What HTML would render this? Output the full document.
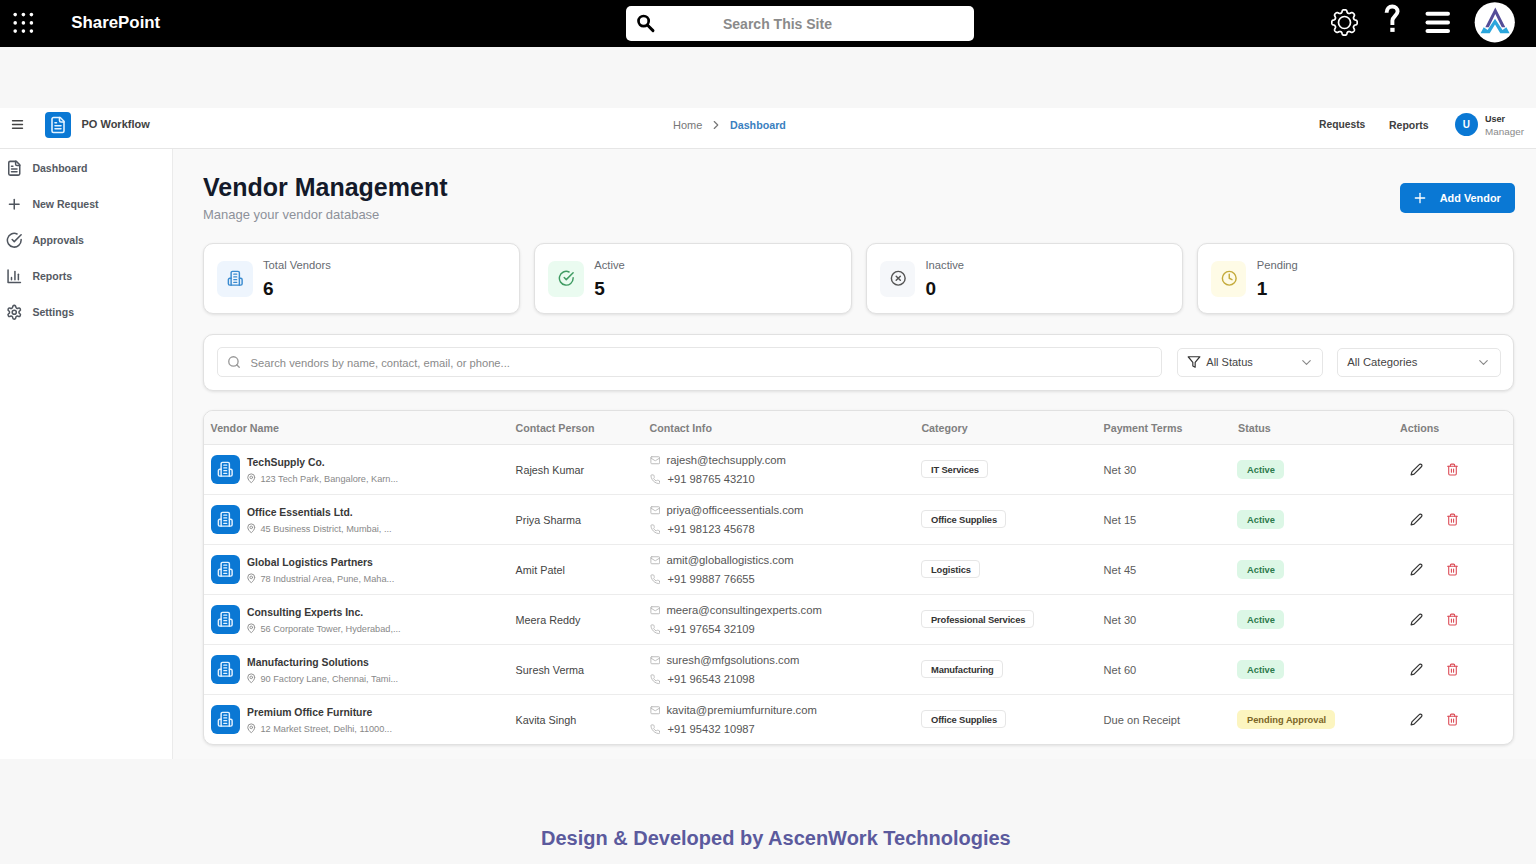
<!DOCTYPE html>
<html><head><meta charset="utf-8">
<style>
*{box-sizing:border-box;margin:0;padding:0}
html,body{width:1536px;height:864px;overflow:hidden;background:#f7f7f7;font-family:"Liberation Sans",sans-serif;position:relative}
.abs{position:absolute}
.card{position:absolute;background:#fff;border:1px solid #e1e1e1;border-radius:10px;box-shadow:0 1px 3px rgba(0,0,0,.1)}
.t{position:absolute;white-space:nowrap;line-height:1}
</style></head><body>
<div class="abs" style="left:0px;top:0px;width:1536px;height:47px;background:#000;"></div>
<svg class="abs" style="left:0;top:0" width="50" height="47"><g fill="#fff"><circle cx="15.2" cy="14.6" r="1.8"/><circle cx="23.4" cy="14.6" r="1.8"/><circle cx="31.4" cy="14.6" r="1.8"/><circle cx="15.2" cy="22.9" r="1.8"/><circle cx="23.4" cy="22.9" r="1.8"/><circle cx="31.4" cy="22.9" r="1.8"/><circle cx="15.2" cy="31.1" r="1.8"/><circle cx="23.4" cy="31.1" r="1.8"/><circle cx="31.4" cy="31.1" r="1.8"/></g></svg>
<div class="t" style="left:71.3px;top:14.9px;font-size:16.85px;font-weight:700;color:#fff;">SharePoint</div>
<div class="abs" style="left:626px;top:6px;width:348px;height:34.5px;background:#fff;border-radius:5px"></div>
<svg class="abs" style="left:630px;top:8px" width="30" height="30"><circle cx="13.6" cy="13.1" r="5.1" fill="none" stroke="#000" stroke-width="2.7"/><line x1="17.4" y1="17" x2="23" y2="22.6" stroke="#000" stroke-width="2.9" stroke-linecap="round"/></svg>
<div class="t" style="left:723px;top:17.1px;font-size:14px;font-weight:700;color:#8a8a8a;">Search This Site</div>
<svg class="abs" style="left:1331px;top:8.8px" width="27" height="27" viewBox="0 0 27 27"><path fill="none" stroke="#fff" stroke-width="1.7" stroke-linejoin="round" d="M13.5 0.8 L13.8 0.8 L14.2 0.8 L14.5 0.8 L14.8 0.9 L15.1 1.1 L15.4 1.3 L15.7 1.8 L15.9 2.3 L16.0 2.9 L16.2 3.4 L16.4 3.7 L16.6 3.9 L16.8 4.1 L17.1 4.2 L17.3 4.3 L17.5 4.4 L17.8 4.5 L18.1 4.5 L18.4 4.5 L18.7 4.4 L19.2 4.2 L19.7 3.9 L20.3 3.7 L20.7 3.5 L21.1 3.6 L21.5 3.7 L21.8 3.8 L22.0 4.0 L22.3 4.3 L22.5 4.5 L22.7 4.7 L23.0 5.0 L23.2 5.2 L23.3 5.5 L23.4 5.9 L23.5 6.3 L23.3 6.7 L23.1 7.3 L22.8 7.8 L22.6 8.3 L22.5 8.6 L22.5 8.9 L22.5 9.2 L22.6 9.5 L22.7 9.7 L22.8 9.9 L22.9 10.2 L23.1 10.4 L23.3 10.6 L23.6 10.8 L24.1 11.0 L24.7 11.1 L25.2 11.3 L25.7 11.6 L25.9 11.9 L26.1 12.2 L26.2 12.5 L26.2 12.8 L26.2 13.2 L26.2 13.5 L26.2 13.8 L26.2 14.2 L26.2 14.5 L26.1 14.8 L25.9 15.1 L25.7 15.4 L25.2 15.7 L24.7 15.9 L24.1 16.0 L23.6 16.2 L23.3 16.4 L23.1 16.6 L22.9 16.8 L22.8 17.1 L22.7 17.3 L22.6 17.5 L22.5 17.8 L22.5 18.1 L22.5 18.4 L22.6 18.7 L22.8 19.2 L23.1 19.7 L23.3 20.3 L23.5 20.7 L23.4 21.1 L23.3 21.5 L23.2 21.8 L23.0 22.0 L22.7 22.3 L22.5 22.5 L22.3 22.7 L22.0 23.0 L21.8 23.2 L21.5 23.3 L21.1 23.4 L20.7 23.5 L20.3 23.3 L19.7 23.1 L19.2 22.8 L18.7 22.6 L18.4 22.5 L18.1 22.5 L17.8 22.5 L17.5 22.6 L17.3 22.7 L17.1 22.8 L16.8 22.9 L16.6 23.1 L16.4 23.3 L16.2 23.6 L16.0 24.1 L15.9 24.7 L15.7 25.2 L15.4 25.7 L15.1 25.9 L14.8 26.1 L14.5 26.2 L14.2 26.2 L13.8 26.2 L13.5 26.2 L13.2 26.2 L12.8 26.2 L12.5 26.2 L12.2 26.1 L11.9 25.9 L11.6 25.7 L11.3 25.2 L11.1 24.7 L11.0 24.1 L10.8 23.6 L10.6 23.3 L10.4 23.1 L10.2 22.9 L9.9 22.8 L9.7 22.7 L9.5 22.6 L9.2 22.5 L8.9 22.5 L8.6 22.5 L8.3 22.6 L7.8 22.8 L7.3 23.1 L6.7 23.3 L6.3 23.5 L5.9 23.4 L5.5 23.3 L5.2 23.2 L5.0 23.0 L4.7 22.7 L4.5 22.5 L4.3 22.3 L4.0 22.0 L3.8 21.8 L3.7 21.5 L3.6 21.1 L3.5 20.7 L3.7 20.3 L3.9 19.7 L4.2 19.2 L4.4 18.7 L4.5 18.4 L4.5 18.1 L4.5 17.8 L4.4 17.5 L4.3 17.3 L4.2 17.1 L4.1 16.8 L3.9 16.6 L3.7 16.4 L3.4 16.2 L2.9 16.0 L2.3 15.9 L1.8 15.7 L1.3 15.4 L1.1 15.1 L0.9 14.8 L0.8 14.5 L0.8 14.2 L0.8 13.8 L0.8 13.5 L0.8 13.2 L0.8 12.8 L0.8 12.5 L0.9 12.2 L1.1 11.9 L1.3 11.6 L1.8 11.3 L2.3 11.1 L2.9 11.0 L3.4 10.8 L3.7 10.6 L3.9 10.4 L4.1 10.2 L4.2 9.9 L4.3 9.7 L4.4 9.5 L4.5 9.2 L4.5 8.9 L4.5 8.6 L4.4 8.3 L4.2 7.8 L3.9 7.3 L3.7 6.7 L3.5 6.3 L3.6 5.9 L3.7 5.5 L3.8 5.2 L4.0 5.0 L4.3 4.7 L4.5 4.5 L4.7 4.3 L5.0 4.0 L5.2 3.8 L5.5 3.7 L5.9 3.6 L6.3 3.5 L6.7 3.7 L7.3 3.9 L7.8 4.2 L8.3 4.4 L8.6 4.5 L8.9 4.5 L9.2 4.5 L9.5 4.4 L9.7 4.3 L9.9 4.2 L10.2 4.1 L10.4 3.9 L10.6 3.7 L10.8 3.4 L11.0 2.9 L11.1 2.3 L11.3 1.8 L11.6 1.3 L11.9 1.1 L12.2 0.9 L12.5 0.8 L12.8 0.8 L13.2 0.8Z"/><circle cx="13.5" cy="13.5" r="6" fill="none" stroke="#fff" stroke-width="1.7"/></svg>
<svg class="abs" style="left:1375px;top:0" width="35" height="40"><path d="M11.6 12.8C11.6 8.6 14.2 6.5 17.3 6.5C20.3 6.5 22.6 8.7 22.6 11.5C22.6 15 17.4 16.6 17.4 20.4L17.4 24.9" fill="none" stroke="#fff" stroke-width="3.9"/><rect x="15.3" y="27.8" width="4.3" height="4.1" fill="#fff"/></svg>
<svg class="abs" style="left:1424px;top:10px" width="28" height="26"><g stroke="#fff" stroke-width="4" stroke-linecap="round"><line x1="3.5" y1="3.8" x2="24" y2="3.8"/><line x1="3.5" y1="12.5" x2="24" y2="12.5"/><line x1="3.5" y1="21.1" x2="24" y2="21.1"/></g></svg>
<svg class="abs" style="left:1474px;top:2px" width="41" height="41" viewBox="0 0 41 41">
    <circle cx="20.75" cy="20.3" r="20.1" fill="#fff"/>
    <path d="M21.3 5.6 L11.3 25.2 L14.8 25.2 L21.3 11.9 L27.8 25.2 L31.3 25.2 Z" fill="#544d98"/>
    <path d="M21 16.8 L13.6 27.9 L9.7 25.3 L6.6 31.2 L15.7 31.2 L21 22.6 L26.3 31.2 L35.6 31.2 L32.4 25.3 L28.5 27.9 Z" fill="#2ba6dc"/>
  </svg>

<div class="abs" style="left:0px;top:47px;width:1536px;height:61px;background:#f7f7f7;"></div>
<div class="abs" style="left:0px;top:108px;width:1536px;height:41px;background:#fff;border-bottom:1px solid #e6e6e6"></div>
<svg class="abs" style="left:9.5px;top:117.3px" width="15" height="15" viewBox="0 0 24 24" fill="none" stroke="#444" stroke-width="2.2" stroke-linecap="round" stroke-linejoin="round"><path d="M4 6h16"/><path d="M4 12h16"/><path d="M4 18h16"/></svg>
<div class="abs" style="left:45px;top:112px;width:26px;height:25.5px;background:#0a78d4;border-radius:4px"></div>
<svg class="abs" style="left:49px;top:115.5px" width="18" height="18" viewBox="0 0 24 24" fill="none" stroke="#e4f3ff" stroke-width="2.1" stroke-linecap="round" stroke-linejoin="round"><path d="M15 2H6a2 2 0 0 0-2 2v16a2 2 0 0 0 2 2h12a2 2 0 0 0 2-2V7Z"/><path d="M14 2v4a2 2 0 0 0 2 2h4"/><path d="M10 9H8"/><path d="M16 13H8"/><path d="M16 17H8"/></svg>
<div class="t" style="left:81.5px;top:119.3px;font-size:11px;font-weight:700;color:#424242;">PO Workflow</div>
<div class="t" style="left:673px;top:120.2px;font-size:11px;font-weight:400;color:#777;">Home</div>
<svg class="abs" style="left:709.2px;top:117.6px" width="14" height="14" viewBox="0 0 24 24" fill="none" stroke="#777" stroke-width="2" stroke-linecap="round" stroke-linejoin="round"><path d="m9 18 6-6-6-6"/></svg>
<div class="t" style="left:730px;top:119.6px;font-size:10.7px;font-weight:700;color:#3a7fc0;">Dashboard</div>
<div class="t" style="left:1319px;top:119.9px;font-size:10.3px;font-weight:700;color:#404040;">Requests</div>
<div class="t" style="left:1389px;top:119.7px;font-size:10.5px;font-weight:700;color:#404040;">Reports</div>
<div class="abs" style="left:1455px;top:113px;width:23px;height:23px;background:#0a78d4;border-radius:50%"></div>
<div class="t" style="left:1462.7px;top:120px;font-size:10px;font-weight:700;color:#fff;">U</div>
<div class="t" style="left:1485px;top:114.7px;font-size:9px;font-weight:700;color:#333;">User</div>
<div class="t" style="left:1485px;top:126.9px;font-size:9.9px;font-weight:400;color:#8a8a8a;">Manager</div>
<div class="abs" style="left:0px;top:149px;width:173px;height:610px;background:#fff;border-right:1px solid #ebebeb"></div>
<svg class="abs" style="left:5.65px;top:159.75px" width="16.5" height="16.5" viewBox="0 0 24 24" fill="none" stroke="#50565f" stroke-width="2.2" stroke-linecap="round" stroke-linejoin="round"><path d="M15 2H6a2 2 0 0 0-2 2v16a2 2 0 0 0 2 2h12a2 2 0 0 0 2-2V7Z"/><path d="M14 2v4a2 2 0 0 0 2 2h4"/><path d="M10 9H8"/><path d="M16 13H8"/><path d="M16 17H8"/></svg>
<div class="t" style="left:32.4px;top:163.2px;font-size:10.55px;font-weight:700;color:#555a63;">Dashboard</div>
<svg class="abs" style="left:5.65px;top:195.75px" width="16.5" height="16.5" viewBox="0 0 24 24" fill="none" stroke="#50565f" stroke-width="2.2" stroke-linecap="round" stroke-linejoin="round"><path d="M5 12h14"/><path d="M12 5v14"/></svg>
<div class="t" style="left:32.4px;top:199.2px;font-size:10.55px;font-weight:700;color:#555a63;">New Request</div>
<svg class="abs" style="left:5.65px;top:231.75px" width="16.5" height="16.5" viewBox="0 0 24 24" fill="none" stroke="#50565f" stroke-width="2.2" stroke-linecap="round" stroke-linejoin="round"><path d="M22 11.08V12a10 10 0 1 1-5.93-9.14"/><path d="m9 11 3 3L22 4"/></svg>
<div class="t" style="left:32.4px;top:235.2px;font-size:10.55px;font-weight:700;color:#555a63;">Approvals</div>
<svg class="abs" style="left:5.65px;top:267.75px" width="16.5" height="16.5" viewBox="0 0 24 24" fill="none" stroke="#50565f" stroke-width="2.2" stroke-linecap="round" stroke-linejoin="round"><path d="M3 3v18h18"/><path d="M18 17V9"/><path d="M13 17V5"/><path d="M8 17v-3"/></svg>
<div class="t" style="left:32.4px;top:271.2px;font-size:10.55px;font-weight:700;color:#555a63;">Reports</div>
<svg class="abs" style="left:5.65px;top:303.75px" width="16.5" height="16.5" viewBox="0 0 24 24" fill="none" stroke="#50565f" stroke-width="2.2" stroke-linecap="round" stroke-linejoin="round"><path d="M12.22 2h-.44a2 2 0 0 0-2 2v.18a2 2 0 0 1-1 1.73l-.43.25a2 2 0 0 1-2 0l-.15-.08a2 2 0 0 0-2.73.73l-.22.38a2 2 0 0 0 .73 2.73l.15.1a2 2 0 0 1 1 1.72v.51a2 2 0 0 1-1 1.74l-.15.09a2 2 0 0 0-.73 2.73l.22.38a2 2 0 0 0 2.73.73l.15-.08a2 2 0 0 1 2 0l.43.25a2 2 0 0 1 1 1.73V20a2 2 0 0 0 2 2h.44a2 2 0 0 0 2-2v-.18a2 2 0 0 1 1-1.73l.43-.25a2 2 0 0 1 2 0l.15.08a2 2 0 0 0 2.73-.73l.22-.39a2 2 0 0 0-.73-2.73l-.15-.08a2 2 0 0 1-1-1.74v-.5a2 2 0 0 1 1-1.74l.15-.09a2 2 0 0 0 .73-2.73l-.22-.38a2 2 0 0 0-2.73-.73l-.15.08a2 2 0 0 1-2 0l-.43-.25a2 2 0 0 1-1-1.73V4a2 2 0 0 0-2-2z"/><circle cx="12" cy="12" r="3"/></svg>
<div class="t" style="left:32.4px;top:307.2px;font-size:10.55px;font-weight:700;color:#555a63;">Settings</div>
<div class="abs" style="left:173px;top:149px;width:1363px;height:610px;background:#f9f9f9;"></div>
<div class="t" style="left:203px;top:175.1px;font-size:25px;font-weight:700;color:#141a2a;">Vendor Management</div>
<div class="t" style="left:203px;top:208px;font-size:13px;font-weight:400;color:#8d9199;">Manage your vendor database</div>
<div class="abs" style="left:1400px;top:183px;width:114.5px;height:29.5px;background:#0a78d4;border-radius:5px"></div>
<svg class="abs" style="left:1411.7px;top:189.8px" width="16" height="16" viewBox="0 0 24 24" fill="none" stroke="#fff" stroke-width="2" stroke-linecap="round" stroke-linejoin="round"><path d="M5 12h14"/><path d="M12 5v14"/></svg>
<div class="t" style="left:1439.7px;top:192.7px;font-size:10.9px;font-weight:700;color:#fff;">Add Vendor</div>
<div class="card" style="left:203px;top:243.3px;width:317.25px;height:70.3px"></div>
<div class="abs" style="left:217.2px;top:261px;width:35.5px;height:35.5px;background:#eef5fd;border-radius:7px"></div>
<svg class="abs" style="left:227.1px;top:270.3px" width="16.5" height="16.5" viewBox="0 0 24 24" fill="none" stroke="#3a8bd0" stroke-width="2.1" stroke-linecap="round" stroke-linejoin="round"><path d="M6 22V4a2 2 0 0 1 2-2h8a2 2 0 0 1 2 2v18Z"/><path d="M6 12H4a2 2 0 0 0-2 2v6a2 2 0 0 0 2 2h2"/><path d="M18 12h2a2 2 0 0 1 2 2v6a2 2 0 0 1-2 2h-2"/><path d="M10 6h4"/><path d="M10 10h4"/><path d="M10 14h4"/><path d="M10 18h4"/></svg>
<div class="t" style="left:263px;top:259.9px;font-size:11.2px;font-weight:400;color:#666a70;">Total Vendors</div>
<div class="t" style="left:263px;top:278.8px;font-size:19px;font-weight:700;color:#111;">6</div>
<div class="card" style="left:534.25px;top:243.3px;width:317.25px;height:70.3px"></div>
<div class="abs" style="left:548.45px;top:261px;width:35.5px;height:35.5px;background:#eafbf0;border-radius:7px"></div>
<svg class="abs" style="left:558.35px;top:270.3px" width="16.5" height="16.5" viewBox="0 0 24 24" fill="none" stroke="#3f9b62" stroke-width="2.1" stroke-linecap="round" stroke-linejoin="round"><path d="M22 11.08V12a10 10 0 1 1-5.93-9.14"/><path d="m9 11 3 3L22 4"/></svg>
<div class="t" style="left:594.25px;top:259.9px;font-size:11.2px;font-weight:400;color:#666a70;">Active</div>
<div class="t" style="left:594.25px;top:278.8px;font-size:19px;font-weight:700;color:#111;">5</div>
<div class="card" style="left:865.5px;top:243.3px;width:317.25px;height:70.3px"></div>
<div class="abs" style="left:879.7px;top:261px;width:35.5px;height:35.5px;background:#f5f7fa;border-radius:7px"></div>
<svg class="abs" style="left:889.6px;top:270.3px" width="16.5" height="16.5" viewBox="0 0 24 24" fill="none" stroke="#555" stroke-width="2.1" stroke-linecap="round" stroke-linejoin="round"><circle cx="12" cy="12" r="10"/><path d="m15 9-6 6"/><path d="m9 9 6 6"/></svg>
<div class="t" style="left:925.5px;top:259.9px;font-size:11.2px;font-weight:400;color:#666a70;">Inactive</div>
<div class="t" style="left:925.5px;top:278.8px;font-size:19px;font-weight:700;color:#111;">0</div>
<div class="card" style="left:1196.75px;top:243.3px;width:317.25px;height:70.3px"></div>
<div class="abs" style="left:1210.95px;top:261px;width:35.5px;height:35.5px;background:#fefbe6;border-radius:7px"></div>
<svg class="abs" style="left:1220.85px;top:270.3px" width="16.5" height="16.5" viewBox="0 0 24 24" fill="none" stroke="#c4ab3c" stroke-width="2.1" stroke-linecap="round" stroke-linejoin="round"><circle cx="12" cy="12" r="10"/><polyline points="12 6 12 12 16 14"/></svg>
<div class="t" style="left:1256.75px;top:259.9px;font-size:11.2px;font-weight:400;color:#666a70;">Pending</div>
<div class="t" style="left:1256.75px;top:278.8px;font-size:19px;font-weight:700;color:#111;">1</div>
<div class="card" style="left:203px;top:333.5px;width:1311px;height:57.3px"></div>
<div class="abs" style="left:217.3px;top:347.3px;width:944.5px;height:29.3px;background:#fff;border:1px solid #e6e6e6;border-radius:5px"></div>
<svg class="abs" style="left:226.5px;top:354.9px" width="14" height="14" viewBox="0 0 24 24" fill="none" stroke="#999" stroke-width="2.3" stroke-linecap="round" stroke-linejoin="round"><circle cx="11" cy="11" r="8"/><path d="m21 21-4.3-4.3"/></svg>
<div class="t" style="left:250.6px;top:357.6px;font-size:11.2px;font-weight:400;color:#8a8a8a;">Search vendors by name, contact, email, or phone...</div>
<div class="abs" style="left:1176.6px;top:348px;width:146px;height:28.5px;background:#fff;border:1px solid #e6e6e6;border-radius:5px"></div>
<svg class="abs" style="left:1186.5px;top:355px" width="14" height="14" viewBox="0 0 24 24" fill="none" stroke="#333" stroke-width="2" stroke-linecap="round" stroke-linejoin="round"><polygon points="22 3 2 3 10 12.46 10 19 14 21 14 12.46 22 3"/></svg>
<div class="t" style="left:1206.3px;top:356.9px;font-size:11px;font-weight:400;color:#444;">All Status</div>
<svg class="abs" style="left:1299px;top:354.8px" width="15" height="15" viewBox="0 0 24 24" fill="none" stroke="#888" stroke-width="1.8" stroke-linecap="round" stroke-linejoin="round"><path d="m6 9 6 6 6-6"/></svg>
<div class="abs" style="left:1337.4px;top:348px;width:163.4px;height:28.5px;background:#fff;border:1px solid #e6e6e6;border-radius:5px"></div>
<div class="t" style="left:1347.3px;top:356.9px;font-size:11.25px;font-weight:400;color:#444;">All Categories</div>
<svg class="abs" style="left:1476px;top:354.8px" width="15" height="15" viewBox="0 0 24 24" fill="none" stroke="#888" stroke-width="1.8" stroke-linecap="round" stroke-linejoin="round"><path d="m6 9 6 6 6-6"/></svg>
<div class="card" style="left:203px;top:410.4px;width:1311px;height:335px;overflow:hidden"><div style="position:absolute;left:0;top:0;width:100%;height:34px;background:#f9f9f9;border-bottom:1px solid #e8e8e8"></div></div>
<div class="t" style="left:210.6px;top:422.8px;font-size:10.7px;font-weight:700;color:#808080;">Vendor Name</div>
<div class="t" style="left:515.6px;top:422.8px;font-size:10.7px;font-weight:700;color:#808080;">Contact Person</div>
<div class="t" style="left:649.6px;top:422.8px;font-size:10.7px;font-weight:700;color:#808080;">Contact Info</div>
<div class="t" style="left:921.4px;top:422.8px;font-size:10.7px;font-weight:700;color:#808080;">Category</div>
<div class="t" style="left:1103.6px;top:422.8px;font-size:10.7px;font-weight:700;color:#808080;">Payment Terms</div>
<div class="t" style="left:1238px;top:422.8px;font-size:10.7px;font-weight:700;color:#808080;">Status</div>
<div class="t" style="left:1400px;top:422.8px;font-size:10.7px;font-weight:700;color:#808080;">Actions</div>
<div class="abs" style="left:204px;top:494px;width:1309px;height:1px;background:#ececec;"></div>
<div class="abs" style="left:211px;top:455px;width:29px;height:29.4px;background:#0a78d4;border-radius:6px"></div>
<svg class="abs" style="left:217.15px;top:461.2px" width="16.5" height="16.5" viewBox="0 0 24 24" fill="none" stroke="#e6f3ff" stroke-width="2.1" stroke-linecap="round" stroke-linejoin="round"><path d="M6 22V4a2 2 0 0 1 2-2h8a2 2 0 0 1 2 2v18Z"/><path d="M6 12H4a2 2 0 0 0-2 2v6a2 2 0 0 0 2 2h2"/><path d="M18 12h2a2 2 0 0 1 2 2v6a2 2 0 0 1-2 2h-2"/><path d="M10 6h4"/><path d="M10 10h4"/><path d="M10 14h4"/><path d="M10 18h4"/></svg>
<div class="t" style="left:247px;top:458.2px;font-size:10.4px;font-weight:700;color:#383838;">TechSupply Co.</div>
<svg class="abs" style="left:246.4px;top:473.4px" width="10.5" height="10.5" viewBox="0 0 24 24" fill="none" stroke="#909090" stroke-width="2.2" stroke-linecap="round" stroke-linejoin="round"><path d="M20 10c0 4.993-5.539 10.193-7.399 11.799a1 1 0 0 1-1.202 0C9.539 20.193 4 14.993 4 10a8 8 0 0 1 16 0"/><circle cx="12" cy="10" r="3"/></svg>
<div class="t" style="left:260.4px;top:474.6px;font-size:9.2px;font-weight:400;color:#888;">123 Tech Park, Bangalore, Karn...</div>
<div class="t" style="left:515.6px;top:464.8px;font-size:10.8px;font-weight:400;color:#444;">Rajesh Kumar</div>
<svg class="abs" style="left:649.5px;top:454.55px" width="10.5" height="10.5" viewBox="0 0 24 24" fill="none" stroke="#b3b3b3" stroke-width="2" stroke-linecap="round" stroke-linejoin="round"><rect width="20" height="16" x="2" y="4" rx="2"/><path d="m22 7-8.97 5.7a1.94 1.94 0 0 1-2.06 0L2 7"/></svg>
<div class="t" style="left:666.4px;top:455.2px;font-size:11.27px;font-weight:400;color:#555;">rajesh@techsupply.com</div>
<svg class="abs" style="left:649.5px;top:474.4px" width="10.5" height="10.5" viewBox="0 0 24 24" fill="none" stroke="#b3b3b3" stroke-width="2" stroke-linecap="round" stroke-linejoin="round"><path d="M22 16.92v3a2 2 0 0 1-2.18 2 19.79 19.79 0 0 1-8.63-3.07 19.5 19.5 0 0 1-6-6 19.79 19.79 0 0 1-3.07-8.67A2 2 0 0 1 4.11 2h3a2 2 0 0 1 2 1.72 12.84 12.84 0 0 0 .7 2.81 2 2 0 0 1-.45 2.11L8.09 9.91a16 16 0 0 0 6 6l1.27-1.27a2 2 0 0 1 2.11-.45 12.84 12.84 0 0 0 2.81.7A2 2 0 0 1 22 16.92z"/></svg>
<div class="t" style="left:667.6px;top:473.6px;font-size:11.17px;font-weight:400;color:#555;">+91 98765 43210</div>
<div class="abs" style="left:921.4px;top:460.4px;height:17.6px;padding:0 8px 0 8.6px;border:1px solid #e6e6e6;border-radius:4px;background:#fff;font-size:9.4px;font-weight:700;color:#333;line-height:17.4px;white-space:nowrap;letter-spacing:-0.15px">IT Services</div>
<div class="t" style="left:1103.6px;top:464.8px;font-size:11.1px;font-weight:400;color:#5c5c5c;">Net 30</div>
<div class="abs" style="left:1237px;top:460.4px;height:18.7px;padding:0 9px 0 10px;border-radius:5px;background:#dcf7e6;font-size:9.3px;font-weight:700;color:#2d7a4c;line-height:21.8px;white-space:nowrap">Active</div>
<svg class="abs" style="left:1409.9px;top:463px" width="13" height="13" viewBox="0 0 24 24" fill="none" stroke="#333" stroke-width="2.2" stroke-linecap="round" stroke-linejoin="round"><path d="M17 3a2.85 2.83 0 1 1 4 4L7.5 20.5 2 22l1.5-5.5Z"/></svg>
<svg class="abs" style="left:1445.8px;top:463.3px" width="13" height="13" viewBox="0 0 24 24" fill="none" stroke="#dc4a55" stroke-width="2" stroke-linecap="round" stroke-linejoin="round"><path d="M3 6h18"/><path d="M19 6v14c0 1-1 2-2 2H7c-1 0-2-1-2-2V6"/><path d="M8 6V4c0-1 1-2 2-2h4c1 0 2 1 2 2v2"/><path d="M10 11v6"/><path d="M14 11v6"/></svg>
<div class="abs" style="left:204px;top:544px;width:1309px;height:1px;background:#ececec;"></div>
<div class="abs" style="left:211px;top:505px;width:29px;height:29.4px;background:#0a78d4;border-radius:6px"></div>
<svg class="abs" style="left:217.15px;top:511.2px" width="16.5" height="16.5" viewBox="0 0 24 24" fill="none" stroke="#e6f3ff" stroke-width="2.1" stroke-linecap="round" stroke-linejoin="round"><path d="M6 22V4a2 2 0 0 1 2-2h8a2 2 0 0 1 2 2v18Z"/><path d="M6 12H4a2 2 0 0 0-2 2v6a2 2 0 0 0 2 2h2"/><path d="M18 12h2a2 2 0 0 1 2 2v6a2 2 0 0 1-2 2h-2"/><path d="M10 6h4"/><path d="M10 10h4"/><path d="M10 14h4"/><path d="M10 18h4"/></svg>
<div class="t" style="left:247px;top:508.2px;font-size:10.4px;font-weight:700;color:#383838;">Office Essentials Ltd.</div>
<svg class="abs" style="left:246.4px;top:523.4px" width="10.5" height="10.5" viewBox="0 0 24 24" fill="none" stroke="#909090" stroke-width="2.2" stroke-linecap="round" stroke-linejoin="round"><path d="M20 10c0 4.993-5.539 10.193-7.399 11.799a1 1 0 0 1-1.202 0C9.539 20.193 4 14.993 4 10a8 8 0 0 1 16 0"/><circle cx="12" cy="10" r="3"/></svg>
<div class="t" style="left:260.4px;top:524.6px;font-size:9.2px;font-weight:400;color:#888;">45 Business District, Mumbai, ...</div>
<div class="t" style="left:515.6px;top:514.8px;font-size:10.8px;font-weight:400;color:#444;">Priya Sharma</div>
<svg class="abs" style="left:649.5px;top:504.55px" width="10.5" height="10.5" viewBox="0 0 24 24" fill="none" stroke="#b3b3b3" stroke-width="2" stroke-linecap="round" stroke-linejoin="round"><rect width="20" height="16" x="2" y="4" rx="2"/><path d="m22 7-8.97 5.7a1.94 1.94 0 0 1-2.06 0L2 7"/></svg>
<div class="t" style="left:666.4px;top:505.2px;font-size:11.27px;font-weight:400;color:#555;">priya@officeessentials.com</div>
<svg class="abs" style="left:649.5px;top:524.4px" width="10.5" height="10.5" viewBox="0 0 24 24" fill="none" stroke="#b3b3b3" stroke-width="2" stroke-linecap="round" stroke-linejoin="round"><path d="M22 16.92v3a2 2 0 0 1-2.18 2 19.79 19.79 0 0 1-8.63-3.07 19.5 19.5 0 0 1-6-6 19.79 19.79 0 0 1-3.07-8.67A2 2 0 0 1 4.11 2h3a2 2 0 0 1 2 1.72 12.84 12.84 0 0 0 .7 2.81 2 2 0 0 1-.45 2.11L8.09 9.91a16 16 0 0 0 6 6l1.27-1.27a2 2 0 0 1 2.11-.45 12.84 12.84 0 0 0 2.81.7A2 2 0 0 1 22 16.92z"/></svg>
<div class="t" style="left:667.6px;top:523.6px;font-size:11.17px;font-weight:400;color:#555;">+91 98123 45678</div>
<div class="abs" style="left:921.4px;top:510.4px;height:17.6px;padding:0 8px 0 8.6px;border:1px solid #e6e6e6;border-radius:4px;background:#fff;font-size:9.4px;font-weight:700;color:#333;line-height:17.4px;white-space:nowrap;letter-spacing:-0.15px">Office Supplies</div>
<div class="t" style="left:1103.6px;top:514.8px;font-size:11.1px;font-weight:400;color:#5c5c5c;">Net 15</div>
<div class="abs" style="left:1237px;top:510.4px;height:18.7px;padding:0 9px 0 10px;border-radius:5px;background:#dcf7e6;font-size:9.3px;font-weight:700;color:#2d7a4c;line-height:21.8px;white-space:nowrap">Active</div>
<svg class="abs" style="left:1409.9px;top:513px" width="13" height="13" viewBox="0 0 24 24" fill="none" stroke="#333" stroke-width="2.2" stroke-linecap="round" stroke-linejoin="round"><path d="M17 3a2.85 2.83 0 1 1 4 4L7.5 20.5 2 22l1.5-5.5Z"/></svg>
<svg class="abs" style="left:1445.8px;top:513.3px" width="13" height="13" viewBox="0 0 24 24" fill="none" stroke="#dc4a55" stroke-width="2" stroke-linecap="round" stroke-linejoin="round"><path d="M3 6h18"/><path d="M19 6v14c0 1-1 2-2 2H7c-1 0-2-1-2-2V6"/><path d="M8 6V4c0-1 1-2 2-2h4c1 0 2 1 2 2v2"/><path d="M10 11v6"/><path d="M14 11v6"/></svg>
<div class="abs" style="left:204px;top:594px;width:1309px;height:1px;background:#ececec;"></div>
<div class="abs" style="left:211px;top:555px;width:29px;height:29.4px;background:#0a78d4;border-radius:6px"></div>
<svg class="abs" style="left:217.15px;top:561.2px" width="16.5" height="16.5" viewBox="0 0 24 24" fill="none" stroke="#e6f3ff" stroke-width="2.1" stroke-linecap="round" stroke-linejoin="round"><path d="M6 22V4a2 2 0 0 1 2-2h8a2 2 0 0 1 2 2v18Z"/><path d="M6 12H4a2 2 0 0 0-2 2v6a2 2 0 0 0 2 2h2"/><path d="M18 12h2a2 2 0 0 1 2 2v6a2 2 0 0 1-2 2h-2"/><path d="M10 6h4"/><path d="M10 10h4"/><path d="M10 14h4"/><path d="M10 18h4"/></svg>
<div class="t" style="left:247px;top:558.2px;font-size:10.4px;font-weight:700;color:#383838;">Global Logistics Partners</div>
<svg class="abs" style="left:246.4px;top:573.4px" width="10.5" height="10.5" viewBox="0 0 24 24" fill="none" stroke="#909090" stroke-width="2.2" stroke-linecap="round" stroke-linejoin="round"><path d="M20 10c0 4.993-5.539 10.193-7.399 11.799a1 1 0 0 1-1.202 0C9.539 20.193 4 14.993 4 10a8 8 0 0 1 16 0"/><circle cx="12" cy="10" r="3"/></svg>
<div class="t" style="left:260.4px;top:574.6px;font-size:9.2px;font-weight:400;color:#888;">78 Industrial Area, Pune, Maha...</div>
<div class="t" style="left:515.6px;top:564.8px;font-size:10.8px;font-weight:400;color:#444;">Amit Patel</div>
<svg class="abs" style="left:649.5px;top:554.55px" width="10.5" height="10.5" viewBox="0 0 24 24" fill="none" stroke="#b3b3b3" stroke-width="2" stroke-linecap="round" stroke-linejoin="round"><rect width="20" height="16" x="2" y="4" rx="2"/><path d="m22 7-8.97 5.7a1.94 1.94 0 0 1-2.06 0L2 7"/></svg>
<div class="t" style="left:666.4px;top:555.2px;font-size:11.27px;font-weight:400;color:#555;">amit@globallogistics.com</div>
<svg class="abs" style="left:649.5px;top:574.4px" width="10.5" height="10.5" viewBox="0 0 24 24" fill="none" stroke="#b3b3b3" stroke-width="2" stroke-linecap="round" stroke-linejoin="round"><path d="M22 16.92v3a2 2 0 0 1-2.18 2 19.79 19.79 0 0 1-8.63-3.07 19.5 19.5 0 0 1-6-6 19.79 19.79 0 0 1-3.07-8.67A2 2 0 0 1 4.11 2h3a2 2 0 0 1 2 1.72 12.84 12.84 0 0 0 .7 2.81 2 2 0 0 1-.45 2.11L8.09 9.91a16 16 0 0 0 6 6l1.27-1.27a2 2 0 0 1 2.11-.45 12.84 12.84 0 0 0 2.81.7A2 2 0 0 1 22 16.92z"/></svg>
<div class="t" style="left:667.6px;top:573.6px;font-size:11.17px;font-weight:400;color:#555;">+91 99887 76655</div>
<div class="abs" style="left:921.4px;top:560.4px;height:17.6px;padding:0 8px 0 8.6px;border:1px solid #e6e6e6;border-radius:4px;background:#fff;font-size:9.4px;font-weight:700;color:#333;line-height:17.4px;white-space:nowrap;letter-spacing:-0.15px">Logistics</div>
<div class="t" style="left:1103.6px;top:564.8px;font-size:11.1px;font-weight:400;color:#5c5c5c;">Net 45</div>
<div class="abs" style="left:1237px;top:560.4px;height:18.7px;padding:0 9px 0 10px;border-radius:5px;background:#dcf7e6;font-size:9.3px;font-weight:700;color:#2d7a4c;line-height:21.8px;white-space:nowrap">Active</div>
<svg class="abs" style="left:1409.9px;top:563px" width="13" height="13" viewBox="0 0 24 24" fill="none" stroke="#333" stroke-width="2.2" stroke-linecap="round" stroke-linejoin="round"><path d="M17 3a2.85 2.83 0 1 1 4 4L7.5 20.5 2 22l1.5-5.5Z"/></svg>
<svg class="abs" style="left:1445.8px;top:563.3px" width="13" height="13" viewBox="0 0 24 24" fill="none" stroke="#dc4a55" stroke-width="2" stroke-linecap="round" stroke-linejoin="round"><path d="M3 6h18"/><path d="M19 6v14c0 1-1 2-2 2H7c-1 0-2-1-2-2V6"/><path d="M8 6V4c0-1 1-2 2-2h4c1 0 2 1 2 2v2"/><path d="M10 11v6"/><path d="M14 11v6"/></svg>
<div class="abs" style="left:204px;top:644px;width:1309px;height:1px;background:#ececec;"></div>
<div class="abs" style="left:211px;top:605px;width:29px;height:29.4px;background:#0a78d4;border-radius:6px"></div>
<svg class="abs" style="left:217.15px;top:611.2px" width="16.5" height="16.5" viewBox="0 0 24 24" fill="none" stroke="#e6f3ff" stroke-width="2.1" stroke-linecap="round" stroke-linejoin="round"><path d="M6 22V4a2 2 0 0 1 2-2h8a2 2 0 0 1 2 2v18Z"/><path d="M6 12H4a2 2 0 0 0-2 2v6a2 2 0 0 0 2 2h2"/><path d="M18 12h2a2 2 0 0 1 2 2v6a2 2 0 0 1-2 2h-2"/><path d="M10 6h4"/><path d="M10 10h4"/><path d="M10 14h4"/><path d="M10 18h4"/></svg>
<div class="t" style="left:247px;top:608.2px;font-size:10.4px;font-weight:700;color:#383838;">Consulting Experts Inc.</div>
<svg class="abs" style="left:246.4px;top:623.4px" width="10.5" height="10.5" viewBox="0 0 24 24" fill="none" stroke="#909090" stroke-width="2.2" stroke-linecap="round" stroke-linejoin="round"><path d="M20 10c0 4.993-5.539 10.193-7.399 11.799a1 1 0 0 1-1.202 0C9.539 20.193 4 14.993 4 10a8 8 0 0 1 16 0"/><circle cx="12" cy="10" r="3"/></svg>
<div class="t" style="left:260.4px;top:624.6px;font-size:9.2px;font-weight:400;color:#888;">56 Corporate Tower, Hyderabad,...</div>
<div class="t" style="left:515.6px;top:614.8px;font-size:10.8px;font-weight:400;color:#444;">Meera Reddy</div>
<svg class="abs" style="left:649.5px;top:604.55px" width="10.5" height="10.5" viewBox="0 0 24 24" fill="none" stroke="#b3b3b3" stroke-width="2" stroke-linecap="round" stroke-linejoin="round"><rect width="20" height="16" x="2" y="4" rx="2"/><path d="m22 7-8.97 5.7a1.94 1.94 0 0 1-2.06 0L2 7"/></svg>
<div class="t" style="left:666.4px;top:605.2px;font-size:11.27px;font-weight:400;color:#555;">meera@consultingexperts.com</div>
<svg class="abs" style="left:649.5px;top:624.4px" width="10.5" height="10.5" viewBox="0 0 24 24" fill="none" stroke="#b3b3b3" stroke-width="2" stroke-linecap="round" stroke-linejoin="round"><path d="M22 16.92v3a2 2 0 0 1-2.18 2 19.79 19.79 0 0 1-8.63-3.07 19.5 19.5 0 0 1-6-6 19.79 19.79 0 0 1-3.07-8.67A2 2 0 0 1 4.11 2h3a2 2 0 0 1 2 1.72 12.84 12.84 0 0 0 .7 2.81 2 2 0 0 1-.45 2.11L8.09 9.91a16 16 0 0 0 6 6l1.27-1.27a2 2 0 0 1 2.11-.45 12.84 12.84 0 0 0 2.81.7A2 2 0 0 1 22 16.92z"/></svg>
<div class="t" style="left:667.6px;top:623.6px;font-size:11.17px;font-weight:400;color:#555;">+91 97654 32109</div>
<div class="abs" style="left:921.4px;top:610.4px;height:17.6px;padding:0 8px 0 8.6px;border:1px solid #e6e6e6;border-radius:4px;background:#fff;font-size:9.4px;font-weight:700;color:#333;line-height:17.4px;white-space:nowrap;letter-spacing:-0.15px">Professional Services</div>
<div class="t" style="left:1103.6px;top:614.8px;font-size:11.1px;font-weight:400;color:#5c5c5c;">Net 30</div>
<div class="abs" style="left:1237px;top:610.4px;height:18.7px;padding:0 9px 0 10px;border-radius:5px;background:#dcf7e6;font-size:9.3px;font-weight:700;color:#2d7a4c;line-height:21.8px;white-space:nowrap">Active</div>
<svg class="abs" style="left:1409.9px;top:613px" width="13" height="13" viewBox="0 0 24 24" fill="none" stroke="#333" stroke-width="2.2" stroke-linecap="round" stroke-linejoin="round"><path d="M17 3a2.85 2.83 0 1 1 4 4L7.5 20.5 2 22l1.5-5.5Z"/></svg>
<svg class="abs" style="left:1445.8px;top:613.3px" width="13" height="13" viewBox="0 0 24 24" fill="none" stroke="#dc4a55" stroke-width="2" stroke-linecap="round" stroke-linejoin="round"><path d="M3 6h18"/><path d="M19 6v14c0 1-1 2-2 2H7c-1 0-2-1-2-2V6"/><path d="M8 6V4c0-1 1-2 2-2h4c1 0 2 1 2 2v2"/><path d="M10 11v6"/><path d="M14 11v6"/></svg>
<div class="abs" style="left:204px;top:694px;width:1309px;height:1px;background:#ececec;"></div>
<div class="abs" style="left:211px;top:655px;width:29px;height:29.4px;background:#0a78d4;border-radius:6px"></div>
<svg class="abs" style="left:217.15px;top:661.2px" width="16.5" height="16.5" viewBox="0 0 24 24" fill="none" stroke="#e6f3ff" stroke-width="2.1" stroke-linecap="round" stroke-linejoin="round"><path d="M6 22V4a2 2 0 0 1 2-2h8a2 2 0 0 1 2 2v18Z"/><path d="M6 12H4a2 2 0 0 0-2 2v6a2 2 0 0 0 2 2h2"/><path d="M18 12h2a2 2 0 0 1 2 2v6a2 2 0 0 1-2 2h-2"/><path d="M10 6h4"/><path d="M10 10h4"/><path d="M10 14h4"/><path d="M10 18h4"/></svg>
<div class="t" style="left:247px;top:658.2px;font-size:10.4px;font-weight:700;color:#383838;">Manufacturing Solutions</div>
<svg class="abs" style="left:246.4px;top:673.4px" width="10.5" height="10.5" viewBox="0 0 24 24" fill="none" stroke="#909090" stroke-width="2.2" stroke-linecap="round" stroke-linejoin="round"><path d="M20 10c0 4.993-5.539 10.193-7.399 11.799a1 1 0 0 1-1.202 0C9.539 20.193 4 14.993 4 10a8 8 0 0 1 16 0"/><circle cx="12" cy="10" r="3"/></svg>
<div class="t" style="left:260.4px;top:674.6px;font-size:9.2px;font-weight:400;color:#888;">90 Factory Lane, Chennai, Tami...</div>
<div class="t" style="left:515.6px;top:664.8px;font-size:10.8px;font-weight:400;color:#444;">Suresh Verma</div>
<svg class="abs" style="left:649.5px;top:654.55px" width="10.5" height="10.5" viewBox="0 0 24 24" fill="none" stroke="#b3b3b3" stroke-width="2" stroke-linecap="round" stroke-linejoin="round"><rect width="20" height="16" x="2" y="4" rx="2"/><path d="m22 7-8.97 5.7a1.94 1.94 0 0 1-2.06 0L2 7"/></svg>
<div class="t" style="left:666.4px;top:655.2px;font-size:11.27px;font-weight:400;color:#555;">suresh@mfgsolutions.com</div>
<svg class="abs" style="left:649.5px;top:674.4px" width="10.5" height="10.5" viewBox="0 0 24 24" fill="none" stroke="#b3b3b3" stroke-width="2" stroke-linecap="round" stroke-linejoin="round"><path d="M22 16.92v3a2 2 0 0 1-2.18 2 19.79 19.79 0 0 1-8.63-3.07 19.5 19.5 0 0 1-6-6 19.79 19.79 0 0 1-3.07-8.67A2 2 0 0 1 4.11 2h3a2 2 0 0 1 2 1.72 12.84 12.84 0 0 0 .7 2.81 2 2 0 0 1-.45 2.11L8.09 9.91a16 16 0 0 0 6 6l1.27-1.27a2 2 0 0 1 2.11-.45 12.84 12.84 0 0 0 2.81.7A2 2 0 0 1 22 16.92z"/></svg>
<div class="t" style="left:667.6px;top:673.6px;font-size:11.17px;font-weight:400;color:#555;">+91 96543 21098</div>
<div class="abs" style="left:921.4px;top:660.4px;height:17.6px;padding:0 8px 0 8.6px;border:1px solid #e6e6e6;border-radius:4px;background:#fff;font-size:9.4px;font-weight:700;color:#333;line-height:17.4px;white-space:nowrap;letter-spacing:-0.15px">Manufacturing</div>
<div class="t" style="left:1103.6px;top:664.8px;font-size:11.1px;font-weight:400;color:#5c5c5c;">Net 60</div>
<div class="abs" style="left:1237px;top:660.4px;height:18.7px;padding:0 9px 0 10px;border-radius:5px;background:#dcf7e6;font-size:9.3px;font-weight:700;color:#2d7a4c;line-height:21.8px;white-space:nowrap">Active</div>
<svg class="abs" style="left:1409.9px;top:663px" width="13" height="13" viewBox="0 0 24 24" fill="none" stroke="#333" stroke-width="2.2" stroke-linecap="round" stroke-linejoin="round"><path d="M17 3a2.85 2.83 0 1 1 4 4L7.5 20.5 2 22l1.5-5.5Z"/></svg>
<svg class="abs" style="left:1445.8px;top:663.3px" width="13" height="13" viewBox="0 0 24 24" fill="none" stroke="#dc4a55" stroke-width="2" stroke-linecap="round" stroke-linejoin="round"><path d="M3 6h18"/><path d="M19 6v14c0 1-1 2-2 2H7c-1 0-2-1-2-2V6"/><path d="M8 6V4c0-1 1-2 2-2h4c1 0 2 1 2 2v2"/><path d="M10 11v6"/><path d="M14 11v6"/></svg>
<div class="abs" style="left:211px;top:705px;width:29px;height:29.4px;background:#0a78d4;border-radius:6px"></div>
<svg class="abs" style="left:217.15px;top:711.2px" width="16.5" height="16.5" viewBox="0 0 24 24" fill="none" stroke="#e6f3ff" stroke-width="2.1" stroke-linecap="round" stroke-linejoin="round"><path d="M6 22V4a2 2 0 0 1 2-2h8a2 2 0 0 1 2 2v18Z"/><path d="M6 12H4a2 2 0 0 0-2 2v6a2 2 0 0 0 2 2h2"/><path d="M18 12h2a2 2 0 0 1 2 2v6a2 2 0 0 1-2 2h-2"/><path d="M10 6h4"/><path d="M10 10h4"/><path d="M10 14h4"/><path d="M10 18h4"/></svg>
<div class="t" style="left:247px;top:708.2px;font-size:10.4px;font-weight:700;color:#383838;">Premium Office Furniture</div>
<svg class="abs" style="left:246.4px;top:723.4px" width="10.5" height="10.5" viewBox="0 0 24 24" fill="none" stroke="#909090" stroke-width="2.2" stroke-linecap="round" stroke-linejoin="round"><path d="M20 10c0 4.993-5.539 10.193-7.399 11.799a1 1 0 0 1-1.202 0C9.539 20.193 4 14.993 4 10a8 8 0 0 1 16 0"/><circle cx="12" cy="10" r="3"/></svg>
<div class="t" style="left:260.4px;top:724.6px;font-size:9.2px;font-weight:400;color:#888;">12 Market Street, Delhi, 11000...</div>
<div class="t" style="left:515.6px;top:714.8px;font-size:10.8px;font-weight:400;color:#444;">Kavita Singh</div>
<svg class="abs" style="left:649.5px;top:704.55px" width="10.5" height="10.5" viewBox="0 0 24 24" fill="none" stroke="#b3b3b3" stroke-width="2" stroke-linecap="round" stroke-linejoin="round"><rect width="20" height="16" x="2" y="4" rx="2"/><path d="m22 7-8.97 5.7a1.94 1.94 0 0 1-2.06 0L2 7"/></svg>
<div class="t" style="left:666.4px;top:705.2px;font-size:11.27px;font-weight:400;color:#555;">kavita@premiumfurniture.com</div>
<svg class="abs" style="left:649.5px;top:724.4px" width="10.5" height="10.5" viewBox="0 0 24 24" fill="none" stroke="#b3b3b3" stroke-width="2" stroke-linecap="round" stroke-linejoin="round"><path d="M22 16.92v3a2 2 0 0 1-2.18 2 19.79 19.79 0 0 1-8.63-3.07 19.5 19.5 0 0 1-6-6 19.79 19.79 0 0 1-3.07-8.67A2 2 0 0 1 4.11 2h3a2 2 0 0 1 2 1.72 12.84 12.84 0 0 0 .7 2.81 2 2 0 0 1-.45 2.11L8.09 9.91a16 16 0 0 0 6 6l1.27-1.27a2 2 0 0 1 2.11-.45 12.84 12.84 0 0 0 2.81.7A2 2 0 0 1 22 16.92z"/></svg>
<div class="t" style="left:667.6px;top:723.6px;font-size:11.17px;font-weight:400;color:#555;">+91 95432 10987</div>
<div class="abs" style="left:921.4px;top:710.4px;height:17.6px;padding:0 8px 0 8.6px;border:1px solid #e6e6e6;border-radius:4px;background:#fff;font-size:9.4px;font-weight:700;color:#333;line-height:17.4px;white-space:nowrap;letter-spacing:-0.15px">Office Supplies</div>
<div class="t" style="left:1103.6px;top:714.8px;font-size:11.1px;font-weight:400;color:#5c5c5c;">Due on Receipt</div>
<div class="abs" style="left:1237px;top:710.4px;height:18.7px;padding:0 9px 0 10px;border-radius:5px;background:#fcf5c0;font-size:9.3px;font-weight:700;color:#7b6526;line-height:21.8px;white-space:nowrap">Pending Approval</div>
<svg class="abs" style="left:1409.9px;top:713px" width="13" height="13" viewBox="0 0 24 24" fill="none" stroke="#333" stroke-width="2.2" stroke-linecap="round" stroke-linejoin="round"><path d="M17 3a2.85 2.83 0 1 1 4 4L7.5 20.5 2 22l1.5-5.5Z"/></svg>
<svg class="abs" style="left:1445.8px;top:713.3px" width="13" height="13" viewBox="0 0 24 24" fill="none" stroke="#dc4a55" stroke-width="2" stroke-linecap="round" stroke-linejoin="round"><path d="M3 6h18"/><path d="M19 6v14c0 1-1 2-2 2H7c-1 0-2-1-2-2V6"/><path d="M8 6V4c0-1 1-2 2-2h4c1 0 2 1 2 2v2"/><path d="M10 11v6"/><path d="M14 11v6"/></svg>
<div class="t" style="left:541px;top:828px;font-size:20px;font-weight:700;color:#5b5a9d;">Design &amp; Developed by AscenWork Technologies</div>
</body></html>
